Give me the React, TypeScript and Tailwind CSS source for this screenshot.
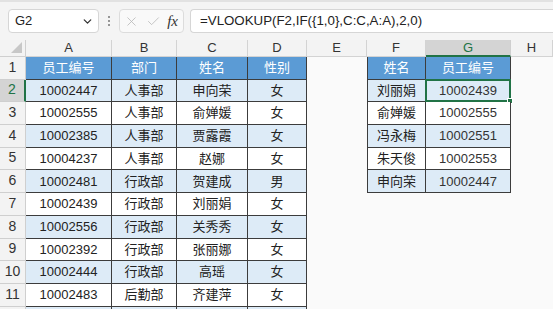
import { Check, ChevronDown, X } from "lucide-react";

const cols = ["A", "B", "C", "D", "E", "F", "G", "H"];

const left: string[][] = [
  ["10002447", "人事部", "申向荣", "女"],
  ["10002555", "人事部", "俞婵媛", "女"],
  ["10002385", "人事部", "贾露霞", "女"],
  ["10004237", "人事部", "赵娜", "女"],
  ["10002481", "行政部", "贺建成", "男"],
  ["10002439", "行政部", "刘丽娟", "女"],
  ["10002556", "行政部", "关秀秀", "女"],
  ["10002392", "行政部", "张丽娜", "女"],
  ["10002444", "行政部", "高瑶", "女"],
  ["10002483", "后勤部", "齐建萍", "女"],
];

const right: string[][] = [
  ["刘丽娟", "10002439"],
  ["俞婵媛", "10002555"],
  ["冯永梅", "10002551"],
  ["朱天俊", "10002553"],
  ["申向荣", "10002447"],
];

const cell = "flex items-center justify-center border-r border-b border-[#3c3c3c] text-[#222]";
const head = "flex items-center justify-center border-r border-b border-[#3c3c3c] bg-[#5b9bd5] text-white";

function FormulaBar() {
  return (
    <div className="h-[40px] bg-[#f4f4f4] border-t-2 border-[#e2e2e2] flex items-center gap-0 pl-[8px]">
      <div className="w-[91px] h-[24px] bg-white border border-[#d6d6d6] rounded-[4px] flex items-center justify-between pl-[6px] pr-[4px]">
        <span className="text-[13px] text-[#222]">G2</span>
        <ChevronDown size={13} strokeWidth={2.4} className="text-[#333]" />
      </div>
      <div className="w-[20px] flex flex-col items-center gap-[2px]">
        <span className="w-[2px] h-[2px] bg-[#777] rounded-full" />
        <span className="w-[2px] h-[2px] bg-[#777] rounded-full" />
        <span className="w-[2px] h-[2px] bg-[#777] rounded-full" />
      </div>
      <div className="w-[65px] h-[24px] bg-[#f9f9f9] border border-[#dcdcdc] rounded-[4px] flex items-center justify-between px-[4px]">
        <X size={15} strokeWidth={1.3} className="text-[#b9b9b9]" />
        <Check size={15} strokeWidth={1.3} className="text-[#b9b9b9]" />
        <span className="text-[15px] italic text-[#333] pr-[1px]" style={{ fontFamily: '"Liberation Serif", serif' }}>
          fx
        </span>
      </div>
      <div className="ml-[6px] flex-1 h-[24px] bg-white border border-[#d6d6d6] border-r-0 rounded-l-[4px] flex items-center pl-[9px]">
        <span className="text-[13.3px] text-[#222] whitespace-nowrap">=VLOOKUP(F2,IF({"{1,0}"},C:C,A:A),2,0)</span>
      </div>
    </div>
  );
}

export default function App() {
  const rows = Array.from({ length: 12 }, (_, i) => i + 1);

  return (
    <div
      className="w-[553px] h-[309px] overflow-hidden bg-[#fafafa] text-[13px]"
      style={{ fontFamily: '"Liberation Sans", "Noto Sans CJK SC", sans-serif' }}
    >
      <FormulaBar />
      <div className="grid grid-cols-[26px_86px_65px_71px_59px_60px_59px_85px_1fr] grid-rows-[17px_repeat(11,22.7px)_20px]">
        {/* column letters */}
        <div className="relative bg-[#f3f3f3] border-r border-b border-[#cfcfcf]">
          <div className="absolute right-[3px] bottom-[3px] w-0 h-0 border-l-[11px] border-l-transparent border-b-[11px] border-b-[#c7c7c7]" />
        </div>
        {cols.map((c) =>
          c === "G" ? (
            <div
              key={c}
              className="flex items-center justify-center bg-[#d4d4d4] border-r border-[#cfcfcf] border-b-2 border-b-[#217346] text-[#217346]"
            >
              {c}
            </div>
          ) : (
            <div key={c} className="flex items-center justify-center bg-[#f3f3f3] border-r border-b border-[#d3d3d3] text-[#333]">
              {c}
            </div>
          )
        )}

        {rows.map((r) => {
          const tinted = r % 2 === 0;
          const bg = tinted ? "bg-[#ddebf7]" : "bg-white";
          const header = r === 1;
          const data = left[r - 2];
          const rdata = right[r - 2];
          return [
            r === 2 ? (
              <div
                key={`h${r}`}
                className="flex items-end justify-center pb-[1px] bg-[#d4d4d4] border-b border-[#cfcfcf] border-r-2 border-r-[#217346] text-[14px] text-[#217346]"
              >
                {r}
              </div>
            ) : (
              <div
                key={`h${r}`}
                className="flex items-end justify-center pb-[1px] bg-[#f3f3f3] border-r border-b border-[#cfcfcf] text-[14px] text-[#333]"
              >
                {r < 12 ? r : null}
              </div>
            ),
            ...(header
              ? ["员工编号", "部门", "姓名", "性别"].map((t) => (
                  <div key={`l${r}${t}`} className={head}>
                    {t}
                  </div>
                ))
              : data
              ? data.map((t, i) => (
                  <div key={`l${r}${i}`} className={`${cell} ${bg}`}>
                    {t}
                  </div>
                ))
              : [0, 1, 2, 3].map((i) => <div key={`l${r}${i}`} className={`${cell} ${bg}`} />)),
            <div key={`e${r}`} />,
            ...(header
              ? [
                  <div key={`f${r}`} className={`${head} border-l`}>
                    姓名
                  </div>,
                  <div key={`g${r}`} className={head}>
                    员工编号
                  </div>,
                ]
              : rdata
              ? [
                  <div key={`f${r}`} className={`${cell} ${bg} border-l`}>
                    {rdata[0]}
                  </div>,
                  <div key={`g${r}`} className={`${cell} ${bg} relative text-[#333]`}>
                    {rdata[1]}
                    {r === 2 && (
                      <div className="absolute -top-[1px] -left-[1px] -right-[1px] -bottom-[1px] border-2 border-[#217346]">
                        <div className="absolute -right-[4px] -bottom-[4px] w-[6px] h-[6px] bg-[#217346] border border-white" />
                      </div>
                    )}
                  </div>,
                ]
              : [<div key={`f${r}`} />, <div key={`g${r}`} />]),
            <div key={`x${r}`} />,
          ];
        })}
      </div>
    </div>
  );
}
